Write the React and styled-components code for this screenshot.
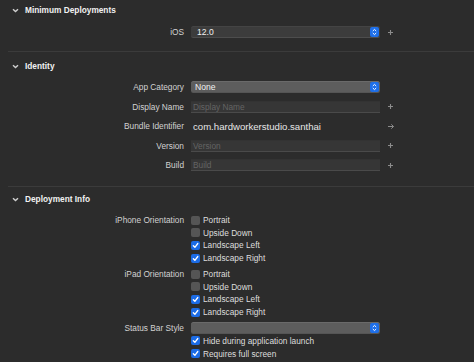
import React from 'react';
import styled, { createGlobalStyle } from 'styled-components';

const Global = createGlobalStyle`
  html, body { margin: 0; padding: 0; background: #2c2c2c; }
  body { font-family: "Liberation Sans", Arial, sans-serif; }
`;

const Page = styled.div`
  width: 474px;
  height: 362px;
  overflow: hidden;
  background: #2c2c2c;
  color: #d6d6d6;
  font-size: 8.2px;
`;

const Section = styled.section`
  margin-left: 8px;
  padding: ${p => p.$pad};
  border-bottom: ${p => (p.$divider ? '1px solid #3b3b3b' : 'none')};
  display: flex;
  flex-direction: column;
  gap: ${p => p.$gap || '0px'};
`;

const Header = styled.div`
  height: 20px;
  display: flex;
  align-items: center;
  gap: 6px;
  padding-left: 4px;
  color: #f2f2f2;
  font-weight: bold;
  font-size: 8.3px;
  margin-bottom: ${p => p.$after || '0px'};
`;

const Row = styled.div`
  display: flex;
  align-items: flex-start;
  margin-top: ${p => p.$mt || '0px'};
`;

const Label = styled.div`
  width: 176px;
  text-align: right;
  height: ${p => p.$h || '12px'};
  line-height: ${p => p.$h || '12px'};
  color: #d2d2d2;
  font-size: 8.3px;
  white-space: nowrap;
`;

const Control = styled.div`
  margin-left: 7px;
  width: 189px;
  display: flex;
  flex-direction: column;
`;

const Action = styled.div`
  margin-left: 6px;
  width: 9px;
  height: 12px;
  display: flex;
  align-items: center;
  justify-content: center;
`;

const Popup = styled.div`
  height: 12px;
  box-sizing: border-box;
  border-radius: 2.5px;
  background: ${p => (p.$light ? '#5d5d5d' : '#3c3c3c')};
  border-top: 1px solid ${p => (p.$light ? '#6a6a6a' : '#444')};
  border-bottom: 1px solid ${p => (p.$light ? '#555' : '#4d4d4d')};
  display: flex;
  align-items: center;
  justify-content: space-between;
  padding-left: ${p => p.$pl || '5px'};
  padding-right: 1px;
  color: #f0f0f0;
  font-size: ${p => p.$fs || '8.6px'};
`;

const Field = styled.div`
  height: 12px;
  box-sizing: border-box;
  background: #363636;
  border-bottom: 1px solid #4a4a4a;
  border-top: 1px solid #333;
  display: flex;
  align-items: center;
  padding-left: 2px;
  font-size: ${p => (p.$placeholder ? '8.3px' : '9.6px')};
  color: ${p => (p.$placeholder ? '#646464' : '#e6e6e6')};
  ${p => (p.$plain ? 'background: transparent; border-color: transparent;' : '')}
`;

const CheckItem = styled.div`
  height: 12.7px;
  display: flex;
  align-items: center;
  gap: 3px;
  color: #dedede;
  font-size: 8.3px;
  white-space: nowrap;
`;

const Box = styled.div`
  width: 9px;
  height: 9px;
  box-sizing: border-box;
  border-radius: 2px;
  background: ${p => (p.$checked ? '#1c6ce6' : '#555')};
  display: flex;
  align-items: center;
  justify-content: center;
`;

const Stepper = () => (
  <svg width="9" height="10" viewBox="0 0 9 10">
    <rect x="0" y="0" width="9" height="10" rx="2" fill="#1e6fe9" />
    <path d="M2.8 4 L4.5 2.4 L6.2 4" stroke="#fff" strokeWidth="1" fill="none" />
    <path d="M2.8 6 L4.5 7.6 L6.2 6" stroke="#fff" strokeWidth="1" fill="none" />
  </svg>
);

const Plus = () => (
  <svg width="7" height="7" viewBox="0 0 7 7">
    <path d="M3.5 1 V6 M1 3.5 H6" stroke="#8c8c8c" strokeWidth="1.1" />
  </svg>
);

const Arrow = () => (
  <svg width="8" height="7" viewBox="0 0 8 7">
    <path d="M1 3.5 H6.5 M4.3 1.3 L6.5 3.5 L4.3 5.7" stroke="#8c8c8c" strokeWidth="1" fill="none" />
  </svg>
);

const Chevron = () => (
  <svg width="7" height="5" viewBox="0 0 7 5">
    <path d="M1 1.2 L3.5 3.6 L6 1.2" stroke="#cfcfcf" strokeWidth="1.4" fill="none" />
  </svg>
);

const Check = () => (
  <svg width="7" height="7" viewBox="0 0 7 7">
    <path d="M1.3 3.7 L2.9 5.3 L5.8 1.5" stroke="#fff" strokeWidth="1.3" fill="none" strokeLinecap="round" strokeLinejoin="round" />
  </svg>
);

const Checkbox = ({ checked, label }) => (
  <CheckItem>
    <Box $checked={checked}>{checked && <Check />}</Box>
    <span>{label}</span>
  </CheckItem>
);

const identity = [
  { label: 'Display Name', text: 'Display Name', placeholder: true, action: 'plus' },
  { label: 'Bundle Identifier', text: 'com.hardworkerstudio.santhai', plain: true, action: 'arrow' },
  { label: 'Version', text: 'Version', placeholder: true, action: 'plus' },
  { label: 'Build', text: 'Build', placeholder: true, action: 'plus' },
];

const orientations = [
  { label: 'Portrait', checked: false },
  { label: 'Upside Down', checked: false },
  { label: 'Landscape Left', checked: true },
  { label: 'Landscape Right', checked: true },
];

export default function App() {
  return (
    <Page>
      <Global />
      <Section $divider $pad="0 0 13px 0">
        <Header $after="6px">
          <Chevron />
          <span>Minimum Deployments</span>
        </Header>
        <Row>
          <Label>iOS</Label>
          <Control>
            <Popup $pl="6px">
              <span>12.0</span>
              <Stepper />
            </Popup>
          </Control>
          <Action><Plus /></Action>
        </Row>
      </Section>

      <Section $divider $pad="4px 0 15px 0" $gap="7.5px">
        <Header>
          <Chevron />
          <span>Identity</span>
        </Header>
        <Row $mt="-2.5px">
          <Label>App Category</Label>
          <Control>
            <Popup $light $pl="4px">
              <span>None</span>
              <Stepper />
            </Popup>
          </Control>
        </Row>
        {identity.map(r => (
          <Row key={r.label}>
            <Label>{r.label}</Label>
            <Control>
              <Field $placeholder={r.placeholder} $plain={r.plain}>{r.text}</Field>
            </Control>
            <Action>{r.action === 'arrow' ? <Arrow /> : <Plus />}</Action>
          </Row>
        ))}
      </Section>

      <Section $pad="2px 0 0 0">
        <Header $after="4.7px">
          <Chevron />
          <span>Deployment Info</span>
        </Header>
        <Row>
          <Label $h="12.7px">iPhone Orientation</Label>
          <Control>
            {orientations.map(o => <Checkbox key={o.label} {...o} />)}
          </Control>
        </Row>
        <Row $mt="3.3px">
          <Label $h="12.7px">iPad Orientation</Label>
          <Control>
            {orientations.map(o => <Checkbox key={o.label} {...o} />)}
          </Control>
        </Row>
        <Row $mt="3.6px">
          <Label>Status Bar Style</Label>
          <Control>
            <Popup $light>
              <span />
              <Stepper />
            </Popup>
          </Control>
        </Row>
        <Row $mt="0.5px">
          <Label $h="12.7px" />
          <Control>
            <Checkbox checked label="Hide during application launch" />
            <Checkbox checked label="Requires full screen" />
          </Control>
        </Row>
      </Section>
    </Page>
  );
}
